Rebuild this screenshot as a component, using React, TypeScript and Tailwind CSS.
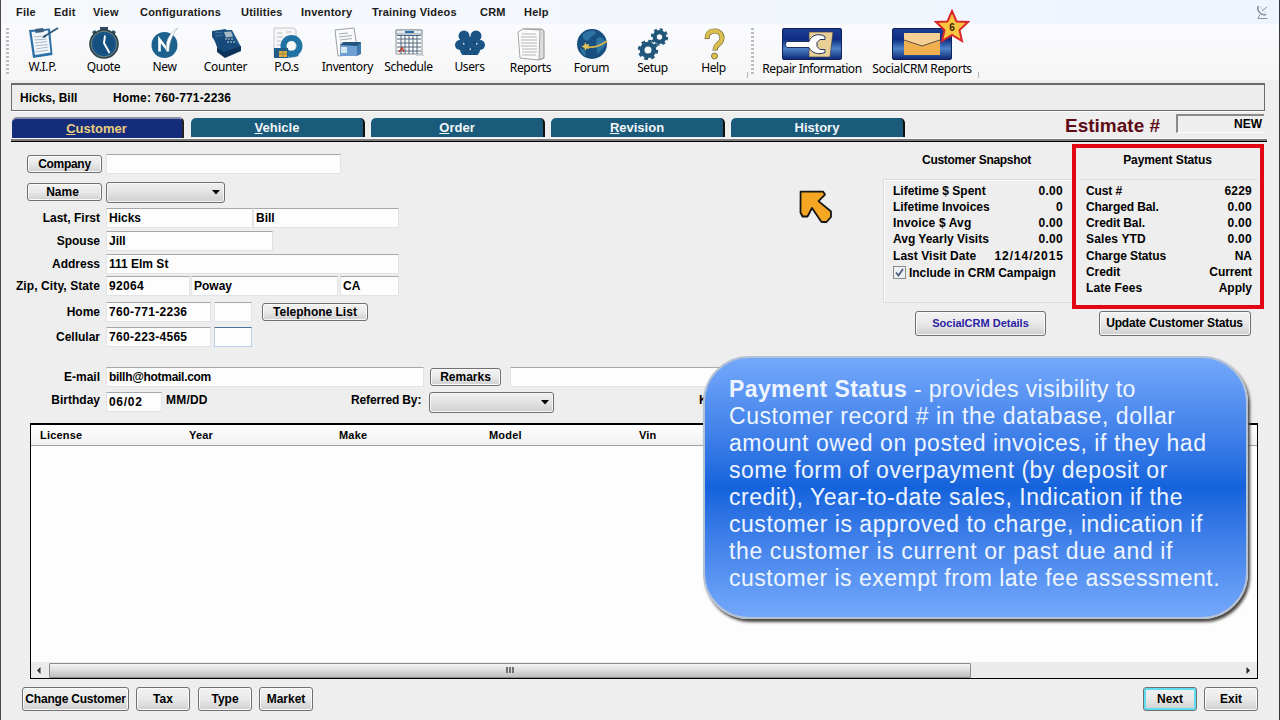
import React from 'react';

const menuItems = [
  { label: 'File', width: 'w-[38px]' },
  { label: 'Edit', width: 'w-[39px]' },
  { label: 'View', width: 'w-[47px]' },
  { label: 'Configurations', width: 'w-[101px]' },
  { label: 'Utilities', width: 'w-[60px]' },
  { label: 'Inventory', width: 'w-[71px]' },
  { label: 'Training Videos', width: 'w-[108px]' },
  { label: 'CRM', width: 'w-[44px]' },
  { label: 'Help', width: 'w-[40px]' },
];

const ClipboardIcon = () => (
  <svg width="32" height="32" viewBox="0 0 32 32">
    <path d="M2 3L23 1.500L25.500 28L6 31Z" fill="#2b6fa6" />
    <path d="M4.500 5L21 3.500L23.500 25.500L8 28Z" fill="#f2f6fa" />
    <path d="M8 2L16 1L17 5L8.500 6Z" fill="#3c5f80" />
    <path d="M7 10l12-1M7.500 13l12-1M8 16l12-1.500M8.500 19l12-1.500M9 22l12-2M9 25l12-2" stroke="#a9bac9" strokeWidth="1" />
    <path d="M31 1L17 9.500" stroke="#2d5878" strokeWidth="1.800" />
    <path d="M18 8l-3 3 4-1z" fill="#16334c" />
  </svg>
);

const ClockIcon = () => (
  <svg width="32" height="32" viewBox="0 0 32 32">
    <path d="M12 0h8v3h-8zM4 5l3-2 2 3-3 2zM28 5l-3-2-2 3 3 2z" fill="#2f4d5e" />
    <circle cx="16" cy="17" r="14.800" fill="#2b4453" />
    <circle cx="16" cy="17" r="12.800" fill="#175282" stroke="#8f947c" strokeWidth=".8" />
    <circle cx="16" cy="17" r="10.500" fill="#154f80" stroke="#2a77a8" strokeWidth=".8" strokeDasharray="1.500 2" />
    <path d="M17 8.500l-1 7.500 5.500 10" fill="none" stroke="#fff" strokeWidth="1.900" />
  </svg>
);

const NewIcon = () => (
  <svg width="32" height="32" viewBox="0 0 32 32">
    <circle cx="15.500" cy="18" r="13" fill="#1d628f" />
    <path d="M10.500 24.500V12.500l8.500 11" fill="none" stroke="#fff" strokeWidth="2.600" />
    <path d="M17.500 24.500h2.500c0-8 3-16 8.500-23.500-5.500 3.500-9.500 9-11 15z" fill="#fff" stroke="#9aa9b5" strokeWidth=".6" />
  </svg>
);

const CounterIcon = () => (
  <svg width="32" height="32" viewBox="0 0 32 32">
    <path d="M2 4l14-2 3 12-9 7-8-11z" fill="#1a4f7d" />
    <path d="M15 3l7 0 9 17-12 3z" fill="#1d588a" />
    <path d="M4 12l16-1 11 9-2 3-13 5-9-8z" fill="#174a7a" />
    <path d="M7 20l7 5 17-6v5l-16 7-8-6z" fill="#0e335a" />
    <path d="M14 5l7-.5 2 5-7 1z" fill="#a9bcc8" />
    <path d="M15 12h8M17 15h8" stroke="#8fa5b5" strokeWidth="1.300" strokeDasharray="2 1" />
    <path d="M5 6l7-1M6 9l7-1" stroke="#3c79a8" />
  </svg>
);

const PurchaseIcon = () => (
  <svg width="32" height="32" viewBox="0 0 32 32">
    <path d="M3 1h20l2 2v27H3z" fill="#f6f6f6" stroke="#c4c8cc" />
    <path d="M6 6h5M6 10h6M6 14h4M15 5h5M6 18h4" stroke="#b9c2ca" />
    <circle cx="20.500" cy="19" r="8" fill="none" stroke="#2273a5" strokeWidth="6" />
    <path d="M17 31l4-8 7 6z" fill="#2273a5" />
    <path d="M3 21h14v10H3z" fill="#225d8a" />
    <path d="M8 24h8v6H8z" fill="#d6ab45" />
    <path d="M8 27h8M12 24v6" stroke="#8d783c" strokeWidth=".7" />
  </svg>
);

const InventoryIcon = () => (
  <svg width="32" height="32" viewBox="0 0 32 32">
    <path d="M3 3l19-2 4 26-20 2z" fill="#fafafa" stroke="#9ba1a7" />
    <path d="M7 7l9-1M7 10l13-1.500M8 13l12-1.500M8 16l6-.7" stroke="#a4acb4" />
    <path d="M8 18l4-3h17v12l-4 2H8z" fill="#3f79ad" />
    <path d="M8 18h17v11H8z" fill="#6f9fd0" />
    <path d="M8 18l4-3h17l-4 4z" fill="#22547f" />
    <path d="M9 20h6v6H9z" fill="#d7e6f4" />
  </svg>
);

const ScheduleIcon = () => (
  <svg width="32" height="32" viewBox="0 0 32 32">
    <path d="M3 3h26v24H3z" fill="#fdfdfd" stroke="#8c949c" />
    <path d="M3 3h26v4H3z" fill="#e6edf4" stroke="#8c949c" />
    <path d="M12 5h9" stroke="#2b6da4" strokeWidth="2" />
    <path d="M4 8.500h24" stroke="#3c6a96" />
    <path d="M4 12h24M4 16h24M4 20h24M4 24h24M8 8v19M12 8v19M16 8v19M20 8v19M24 8v19" stroke="#53677c" strokeWidth="1" />
    <path d="M6 25l4-5M9 20l2 5" stroke="#c0392b" strokeWidth="1.400" />
    <path d="M23 28h8" stroke="#c9cdd0" strokeWidth="1.500" />
  </svg>
);

const UsersIcon = () => (
  <svg width="32" height="32" viewBox="0 0 32 32">
    <g fill="#1b5484">
      <circle cx="10" cy="9" r="5.500" />
      <circle cx="22" cy="9" r="5.500" />
      <circle cx="6" cy="18" r="5" />
      <circle cx="26" cy="18" r="5" />
      <circle cx="16" cy="16" r="6.500" />
      <circle cx="11" cy="23" r="5" />
      <circle cx="21" cy="23" r="5" />
      <path d="M8 20h16v8H8z" />
    </g>
    <path d="M11 14l2 3M21 14l-2 3M10 25l2 2M22 25l-2 2M12 21c2 2 6 2 8 0" fill="none" stroke="#0f3c66" />
    <path d="M9 16h1.500v1.500H9zM22 16h1.500v1.500H22zM15.500 21.500h1.500v1.500h-1.500z" fill="#d5e4ef" />
  </svg>
);

const ReportsIcon = () => (
  <svg width="32" height="34" viewBox="0 0 32 34">
    <path d="M8 1l19 0 2 2v27l-5 2z" fill="#dedede" stroke="#8f8f8f" />
    <path d="M3 4l5-3 17 1-1 30-19-2z" fill="#fbfbfb" stroke="#8f8f8f" strokeWidth=".8" />
    <path d="M7 6h14M6 9h16M6 12h16M6 15h16M6 18h16M7 21h15M7 24h15M7 27h14" stroke="#b5b5b5" />
  </svg>
);

const ForumIcon = () => (
  <svg width="32" height="32" viewBox="0 0 32 32">
    <circle cx="16" cy="16" r="15" fill="#174f80" />
    <path d="M7 6c5-4 10-4 13-2-1 4-6 4-7 8-3 2-7-1-6-6zM21 10c4-2 8 1 9 5-2 6-6 9-9 11 1-5-2-11 0-16zM4 20c4 1 6 4 6 8-3-1-5-4-6-8z" fill="#2d74a3" />
    <path d="M8 18c8 3 16 0 23-5" fill="none" stroke="#d6b64a" strokeWidth="1.700" />
    <path d="M9 14l1.500 2.500 3-.5-1.500 2.500 1.500 2.500-3-.5L9 23l-.5-3-3-1.500 3-1.500z" fill="#e2c356" />
  </svg>
);

const GearsIcon = () => (
  <svg width="32" height="32" viewBox="0 0 32 32" fill="none" stroke="#1f5679">
    <circle cx="22.500" cy="9" r="4.800" strokeWidth="4.200" />
    <circle cx="22.500" cy="9" r="7.600" strokeWidth="2.200" strokeDasharray="3.100 2.870" />
    <circle cx="11" cy="22" r="5.900" strokeWidth="4.800" />
    <circle cx="11" cy="22" r="9" strokeWidth="2.400" strokeDasharray="3.700 3.370" />
  </svg>
);

const HelpIcon = () => (
  <svg width="32" height="32" viewBox="0 0 32 32">
    <path d="M9 11c0-6 3-8 7.500-8s7.500 2.500 7.500 7c0 6-7 6-7 12.500" fill="none" stroke="#6d6434" strokeWidth="5" />
    <path d="M9 10.300c0-5.300 3-7.300 7.500-7.300s7.500 2.500 7.500 7c0 6-7 6-7 11.800" fill="none" stroke="#d9bf4e" strokeWidth="3.800" />
    <circle cx="16.500" cy="28" r="3" fill="#d9bf4e" stroke="#6d6434" strokeWidth=".8" />
  </svg>
);

const tools = [
  { label: 'W.I.P.', Icon: ClipboardIcon },
  { label: 'Quote', Icon: ClockIcon },
  { label: 'New', Icon: NewIcon },
  { label: 'Counter', Icon: CounterIcon },
  { label: 'P.O.s', Icon: PurchaseIcon },
  { label: 'Inventory', Icon: InventoryIcon },
  { label: 'Schedule', Icon: ScheduleIcon },
  { label: 'Users', Icon: UsersIcon },
  { label: 'Reports', Icon: ReportsIcon, low: true },
  { label: 'Forum', Icon: ForumIcon, low: true },
  { label: 'Setup', Icon: GearsIcon, low: true },
  { label: 'Help', Icon: HelpIcon, low: true },
];

const Grip = () => (
  <div className="w-[3px] h-[46px] mt-1 bg-[repeating-linear-gradient(to_bottom,#b9bcc0_0_2px,transparent_2px_4px)]" />
);

const WinButton: React.FC<{ className?: string; children: React.ReactNode }> = ({ className, children }) => (
  <button
    className={`shrink-0 flex items-center justify-center whitespace-nowrap rounded-[3px] border border-[#707070] bg-linear-to-b from-[#f2f2f2] via-[#e9e9e9] to-[#cfcfcf] shadow-[inset_0_0_0_1px_#fafafa] ${className ?? ''}`}
  >
    {children}
  </button>
);

const Select: React.FC<{ className?: string }> = ({ className }) => (
  <div className={`shrink-0 flex items-center justify-end pr-1 rounded-[3px] border border-[#707070] bg-linear-to-b from-[#f0f0f0] via-[#e2e2e2] to-[#cfcfcf] shadow-[inset_0_0_0_1px_#f6f6f6] ${className ?? ''}`}>
    <svg width="8" height="5" viewBox="0 0 8 5"><path d="M0 0h8L4 4.500z" fill="#000" /></svg>
  </div>
);

const Field: React.FC<{ className?: string; value?: string }> = ({ className, value }) => (
  <div className={`shrink-0 h-5 flex items-center px-[2px] bg-[#fdfdfd] border border-[#e2e3e6] border-t-[#a5a8ad] whitespace-nowrap ${className ?? ''}`}>
    {value}
  </div>
);

const Row: React.FC<{ className?: string; label?: string; children: React.ReactNode }> = ({ className, label, children }) => (
  <div className={`flex items-center h-5 ${className ?? ''}`}>
    {label && <div className="w-[100px] mr-[6px] shrink-0 text-right whitespace-nowrap">{label}</div>}
    {children}
  </div>
);

const tabs = [
  { before: '', key: 'V', after: 'ehicle' },
  { before: '', key: 'O', after: 'rder' },
  { before: '', key: 'R', after: 'evision' },
  { before: 'His', key: 't', after: 'ory' },
];

interface Stat {
  name: string;
  value: string;
  nameSpacing?: string;
  valueSpacing?: string;
}

const snapshot: Stat[] = [
  { name: 'Lifetime $ Spent', value: '0.00', nameSpacing: 'tracking-normal' },
  { name: 'Lifetime Invoices', value: '0' },
  { name: 'Invoice $ Avg', value: '0.00', nameSpacing: 'tracking-[0.15px]' },
  { name: 'Avg Yearly Visits', value: '0.00', nameSpacing: 'tracking-normal' },
  { name: 'Last Visit Date', value: '12/14/2015', nameSpacing: 'tracking-[0.05px]', valueSpacing: 'tracking-[0.95px] -mr-[1px]' },
];

const payment: Stat[] = [
  { name: 'Cust #', value: '6229', valueSpacing: 'tracking-[0.2px]' },
  { name: 'Charged Bal.', value: '0.00' },
  { name: 'Credit Bal.', value: '0.00' },
  { name: 'Sales YTD', value: '0.00', nameSpacing: 'tracking-[0.15px]' },
  { name: 'Charge Status', value: 'NA', valueSpacing: 'tracking-normal' },
  { name: 'Credit', value: 'Current', valueSpacing: 'tracking-[-0.1px]' },
  { name: 'Late Fees', value: 'Apply', nameSpacing: 'tracking-[0.1px]', valueSpacing: 'tracking-normal' },
];

const StatRows: React.FC<{ rows: Stat[] }> = ({ rows }) => (
  <>
    {rows.map((r) => (
      <div key={r.name} className="flex justify-between h-[16.150px] leading-4 whitespace-nowrap">
        <span className={r.nameSpacing ?? ''}>{r.name}</span>
        <span className={r.valueSpacing ?? 'tracking-[0.3px]'}>{r.value}</span>
      </div>
    ))}
  </>
);

const calloutLines = [
  { text: 'Customer record # in the database, dollar', spacing: 'tracking-[0.57px]' },
  { text: 'amount owed on posted invoices, if they had', spacing: 'tracking-[0.55px]' },
  { text: 'some form of overpayment (by deposit or', spacing: 'tracking-[0.5px]' },
  { text: 'credit), Year-to-date sales, Indication if the', spacing: 'tracking-[0.53px]' },
  { text: 'customer is approved to charge, indication if', spacing: 'tracking-[0.53px]' },
  { text: 'the customer is current or past due and if', spacing: 'tracking-[0.62px]' },
  { text: 'customer is exempt from late fee assessment.', spacing: 'tracking-[0.5px]' },
];

export default function App() {
  return (
    <div className="relative w-[1280px] h-[720px] overflow-hidden flex flex-col bg-[#eeeeee] text-black font-bold text-[12px] leading-4 font-['Liberation_Sans',Arial,sans-serif]">
      {/* menu bar */}
      <div className="h-6 shrink-0 flex items-center pl-4 bg-linear-to-r from-[#f6f8fc] to-[#eff4fd] text-[11px] tracking-[0.2px] text-[#1a1a1a]">
        {menuItems.map((m) => (
          <div key={m.label} className={`${m.width} whitespace-nowrap`}>{m.label}</div>
        ))}
        <svg className="ml-auto mr-[11px]" width="13" height="16" viewBox="0 0 13 16" fill="none" stroke="#8993a3">
          <path d="M2 2c-1 5 2 9 8 9" strokeWidth="1.500" />
          <path d="M6 7l5-4M4 10.500l-2 4h9.500" />
          <path d="M3 1.500l8 9" stroke="#c7ced8" />
        </svg>
      </div>

      {/* toolbar */}
      <div className="h-14 shrink-0 flex bg-linear-to-b from-[#fafbfd] to-[#f6f6f6] font-normal text-[12px] font-['Noto_Sans','Open_Sans',sans-serif]">
        <div className="ml-[6px] mr-[3px]"><Grip /></div>
        {tools.map(({ label, Icon, low }) => (
          <div key={label} className={`w-[61px] flex flex-col items-center ${low ? 'pt-1' : 'pt-[3px]'}`}>
            <div className="h-8"><Icon /></div>
            <div className="tracking-[-0.35px] leading-4 whitespace-nowrap">{label}</div>
          </div>
        ))}
        <div className="ml-[3px] mt-12 mr-[3px] w-px h-1.5 bg-[#b5b5b5]" />
        <Grip />
        <div className="w-[114px] ml-[1px] pt-1 flex flex-col items-center">
          <svg width="60" height="32" viewBox="0 0 60 32">
            <defs>
              <linearGradient id="navy" x1="0" y1="0" x2="0" y2="1">
                <stop offset="0" stopColor="#1f3f94" />
                <stop offset=".35" stopColor="#0e2d82" />
                <stop offset=".65" stopColor="#4d83c8" />
                <stop offset="1" stopColor="#0c2672" />
              </linearGradient>
            </defs>
            <rect x=".5" y=".5" width="59" height="31" rx="1.500" fill="url(#navy)" stroke="#10205a" />
            <path d="M27 4h24l-3 25H27z" fill="#e9cf96" stroke="#3a3a4a" strokeWidth=".7" />
            <path d="M5 13.500h22c2-6 9-9 16-5v3h-5l-3 3v4l3 3h5v3c-7 3-14 0-16-5H5c-2-2-2-4 0-6z" fill="#fff" stroke="#20305c" />
          </svg>
          <div className="leading-[17px] tracking-[-0.45px] whitespace-nowrap">Repair Information</div>
        </div>
        <div className="relative w-[106px] pt-1 flex flex-col items-center">
          <svg width="60" height="32" viewBox="0 0 60 32">
            <rect x=".5" y=".5" width="59" height="31" rx="1.500" fill="url(#navy)" stroke="#10205a" />
            <path d="M12 5h36v22H12z" fill="#f0b050" />
            <path d="M12 5h36v8l-18 5-18-5z" fill="#f6cf94" />
            <path d="M12 12l18 6 18-6" fill="none" stroke="#5c4a33" />
          </svg>
          <svg className="absolute left-[65px] -top-[15px]" width="36" height="34" viewBox="0 0 36 34">
            <path d="M18 2l4.500 10.500L34 13l-8.500 8L28 32l-10-6-10 6 2.500-11L2 13l11.500-.5z" fill="#fbc63f" stroke="#d8262c" strokeWidth="2" />
            <text x="18" y="22" textAnchor="middle" fontSize="10" fontWeight="700" fontFamily="Liberation Sans, sans-serif" fill="#3a1a00">6</text>
          </svg>
          <div className="leading-[17px] tracking-[-0.35px] whitespace-nowrap">SocialCRM Reports</div>
        </div>
        <div className="ml-[3px] mt-12 w-px h-1.5 bg-[#b5b5b5]" />
      </div>

      {/* customer header */}
      <div className="mt-[3px] ml-[11px] w-[1254px] h-7 shrink-0 flex items-center pl-2 border border-t-2 border-[#6a6a6a] bg-[#ededed] shadow-[0_1px_0_#fff]">
        <span className="w-[93px]">Hicks, Bill</span>
        <span className="tracking-[0.15px]">Home: 760-771-2236</span>
      </div>

      {/* tabs */}
      <div className="h-[27px] shrink-0 flex items-end pl-[12px]">
        <div className="w-[172px] h-[21px] mr-[7px] flex items-center justify-center pr-[1px] rounded-t-[5px] bg-[#152b7c] border-t-2 border-r-2 border-t-[#8b90a8] border-r-[#222] text-[13px] text-[#e9cd7e]">
          <span><u>C</u>ustomer</span>
        </div>
        {tabs.map((t) => (
          <div key={t.after} className="w-[174px] h-[19px] mb-[1px] mr-[6px] pt-[1px] flex items-center justify-center rounded-t-[5px] bg-[#1a5a7b] border-r-2 border-[#111] text-[13px] text-[#f2f6f8]">
            <span>{t.before}<u>{t.key}</u>{t.after}</span>
          </div>
        ))}
        <div className="ml-[154px] mb-[1px] text-[19px] leading-[22px] text-[#5e0b16] whitespace-nowrap">Estimate #</div>
        <div className="ml-auto mr-[16px] mb-[5px] w-[88px] h-[19px] flex items-center justify-end pr-[2px] border-t-2 border-l-2 border-[#8a8a8a] border-b border-b-white">NEW</div>
      </div>
      <div className="ml-[11px] w-[1256px] h-1 shrink-0 bg-[#7c7c7c] border-t border-t-[#f8f8f8] border-b border-b-black" />

      <div className="flex h-[225px] shrink-0">
        {/* contact form */}
        <div className="w-[883px] pt-3">
          <Row>
            <WinButton className="ml-[27px] w-[75px] mr-[4px] h-[18px] tracking-[-0.3px]">Company</WinButton>
            <Field className="w-[235px]" />
          </Row>
          <Row className="mt-2">
            <WinButton className="ml-[27px] w-[75px] mr-[4px] h-[18px] pr-1">Name</WinButton>
            <Select className="w-[119px] h-[21px]" />
          </Row>
          <Row className="mt-1.5" label="Last, First">
            <Field className="w-[147px]" value="Hicks" />
            <Field className="w-[146px]" value="Bill" />
          </Row>
          <Row className="mt-[3px]" label="Spouse"><Field className="w-[167px]" value="Jill" /></Row>
          <Row className="mt-[3px]" label="Address"><Field className="w-[293px]" value="111 Elm St" /></Row>
          <div className="mt-[2px] h-5 flex items-center">
            <span className="w-[100px] mr-[6px] text-right whitespace-nowrap tracking-[0.1px]">Zip, City, State</span>
            <Field className="w-[84px] tracking-[0.3px]" value="92064" />
            <Field className="w-[147px] ml-[1px]" value="Poway" />
            <Field className="w-[59px] ml-[2px]" value="CA" />
          </div>
          <Row className="mt-1.5" label="Home">
            <Field className="w-[105px] tracking-[0.3px]" value="760-771-2236" />
            <Field className="w-[38px] ml-[3px]" />
            <WinButton className="w-[106px] ml-[10px] h-[18px]">Telephone List</WinButton>
          </Row>
          <Row className="mt-[5px]" label="Cellular">
            <Field className="w-[105px] tracking-[0.3px]" value="760-223-4565" />
            <div className="ml-[3px] w-[38px] h-5 bg-[#fdfdfd] border border-[#b7cfe4] border-t-[#4a7296]" />
          </Row>
        </div>

        {/* snapshot */}
        <div className="w-[189px] flex flex-col items-center tracking-[-0.05px]">
          <div className="mt-[10px] pr-[2px] tracking-[-0.3px]">Customer Snapshot</div>
          <div className="mt-[11px] w-full h-[124px] pl-[9px] pr-[9px] pt-[3px] border border-r-0 border-[#dcdcdc] shadow-[inset_1px_1px_0_#fafafa]">
            <StatRows rows={snapshot} />
            <div className="flex items-center h-4 pt-[2px]">
              <div className="w-[13px] h-[13px] mr-[3px] border border-[#8a8d90] bg-[#eef0f3] flex items-center justify-center">
                <svg width="9" height="9" viewBox="0 0 9 9" fill="none" stroke="#4b5a85" strokeWidth="1.700"><path d="M1 4.500l2.500 3L8 1" /></svg>
              </div>
              <span className="whitespace-nowrap">Include in CRM Campaign</span>
            </div>
          </div>
          <WinButton className="mt-[8px] mr-[-6px] w-[131px] h-[25px] pb-[1px] text-[11px] tracking-normal text-[#2a23a3]">SocialCRM Details</WinButton>
        </div>

        {/* payment status */}
        <div className="w-[192px] pt-[2px] flex flex-col items-center">
          <div className="w-full h-[165px] shrink-0 border-4 border-[#e30613] pl-[10px] pr-[8px] pt-1 tracking-[-0.1px]">
            <div className="text-center pr-[3px] tracking-[-0.1px]">Payment Status</div>
            <div className="mt-[11px] mx-[-5px] mb-[3px] h-px bg-[#dcdcdc]" />
            <StatRows rows={payment} />
          </div>
          <WinButton className="mt-[2px] ml-[13px] w-[152px] h-[25px] pb-[1px] tracking-[-0.15px]">Update Customer Status</WinButton>
        </div>
      </div>

      <Row className="shrink-0" label="E-mail">
        <Field className="w-[318px] tracking-[-0.3px]" value="billh@hotmail.com" />
        <WinButton className="ml-[6px] w-[71px] h-[18px]">Remarks</WinButton>
        <Field className="ml-[9px] w-[560px]" />
      </Row>
      <div className="shrink-0 mt-[5px] h-5 flex items-center">
        <span className="w-[94px] ml-[6px] mr-[6px] pb-1 text-right">Birthday</span>
        <Field className="w-[56px] tracking-[0.7px]" value="06/02" />
        <span className="ml-1 w-[185px] mb-1 tracking-[0.2px]">MM/DD</span>
        <span className="w-[78px] mb-1 whitespace-nowrap tracking-[-0.15px]">Referred By:</span>
        <Select className="w-[125px] h-[21px]" />
        <span className="ml-[145px] mb-1">K</span>
      </div>

      {/* vehicle list */}
      <div className="mt-[11px] ml-[30px] w-[1228px] h-[256px] shrink-0 flex flex-col bg-[#fdfdfd] border border-t-2 border-black">
        <div className="h-[21px] shrink-0 flex items-center pl-[9px] text-[11px] tracking-[0.2px] border-b border-[#a0a0a0] bg-linear-to-b from-white to-[#f0f0f0]">
          <div className="w-[149px]">License</div>
          <div className="w-[150px]">Year</div>
          <div className="w-[150px]">Make</div>
          <div className="w-[150px]">Model</div>
          <div>Vin</div>
        </div>
        <div className="grow" />
        <div className="h-[16px] shrink-0 flex items-center bg-[#ebebeb] pl-[5px] pr-[6px]">
          <svg width="5" height="7" viewBox="0 0 5 7"><path d="M4.500 0v7L1 3.500z" fill="#333" /></svg>
          <div className="ml-[8px] w-[922px] h-[15px] flex items-center justify-center gap-px border border-[#8c8c8c] rounded-[1px] bg-linear-to-b from-[#f4f4f4] via-[#dcdcdc] to-[#bfbfbf]">
            <span className="w-[2px] h-[6px] bg-[#707070]" />
            <span className="w-[2px] h-[6px] bg-[#707070]" />
            <span className="w-[2px] h-[6px] bg-[#707070]" />
          </div>
          <svg className="ml-auto" width="5" height="7" viewBox="0 0 5 7"><path d="M.5 0v7L4 3.500z" fill="#222" /></svg>
        </div>
      </div>

      {/* bottom buttons */}
      <div className="mt-[8px] flex px-[22px]">
        <WinButton className="w-[107px] h-6 tracking-[-0.2px]">Change Customer</WinButton>
        <WinButton className="ml-[7px] w-[54px] h-6">Tax</WinButton>
        <WinButton className="ml-[8px] w-[54px] h-6">Type</WinButton>
        <WinButton className="ml-[7px] w-[54px] h-6">Market</WinButton>
        <WinButton className="ml-auto w-[54px] h-6 border-[#3a7f9c] shadow-[inset_0_0_0_2px_#5fdcf2]">Next</WinButton>
        <WinButton className="ml-[7px] w-[54px] h-6">Exit</WinButton>
      </div>

      {/* window edges */}
      <div className="absolute left-0 top-0 w-px h-full bg-[#4a4a4a]" />
      <div className="absolute right-0 top-0 w-px h-full bg-[#33373c]" />

      {/* pointer */}
      <svg className="absolute left-[799px] top-[190px]" width="34" height="34" viewBox="0 0 34 34">
        <path d="M1.600 1.600H24l2 3-6.500 6.500L32 21.500v5.500L27.500 32h-5L13 18 8.500 26.500h-5l-2-4z" fill="#f5a623" stroke="#151515" strokeWidth="1.800" strokeLinejoin="round" />
      </svg>

      {/* callout */}
      <div className="absolute left-[703px] top-[356px] w-[545px] h-[263px] rounded-[46px] border-2 border-[#b4c2d6] bg-linear-to-b from-[#74a8fb] via-[#1463dc] to-[#74a8fb] shadow-[2px_3px_3px_#4a4540] pl-6 pt-[18px] font-normal text-[23px] leading-[27px] text-[#eef5ff] whitespace-nowrap">
        <div className="tracking-[0.4px]"><b>Payment Status</b> - provides visibility to</div>
        {calloutLines.map(({ text, spacing }) => (
          <div key={text} className={spacing}>{text}</div>
        ))}
      </div>
    </div>
  );
}
